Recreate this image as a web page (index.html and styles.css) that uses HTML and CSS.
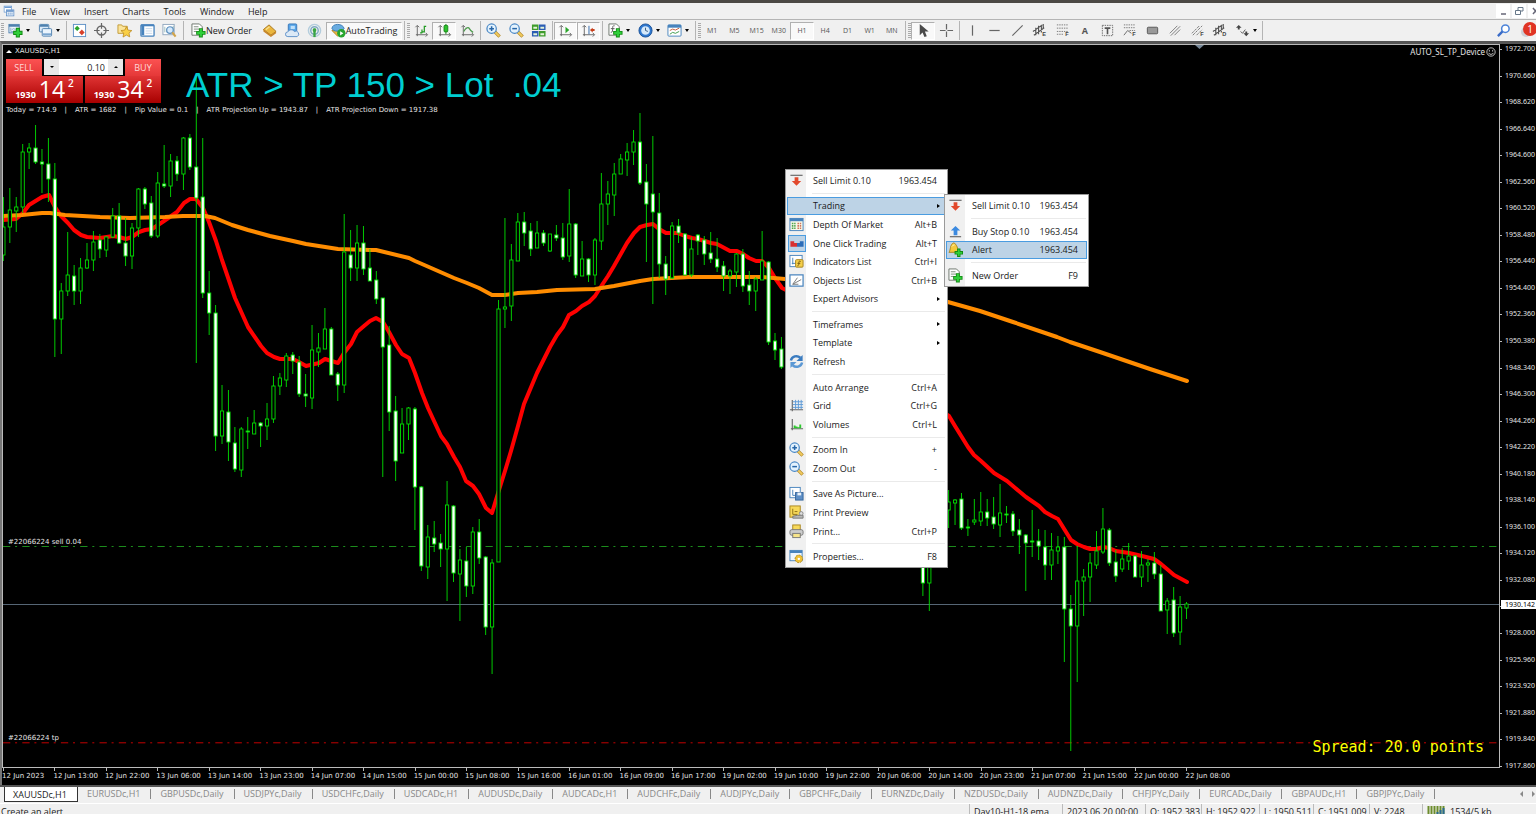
FILE: index.html
```html
<!DOCTYPE html>
<html lang="en">
<head>
  <meta charset="UTF-8">
  <meta name="viewport" content="width=device-width, initial-scale=1.0">
  <title>XAUUSDc,H1</title>
  <link rel="stylesheet" href="styles.css">
</head>
<body>
  <!-- icon set -->
  <svg class="sprite" aria-hidden="true">
    <symbol id="axes" viewBox="0 0 16 16"><path d="M3.500 3v11M2 12.500h12M1.500 4.500l2-2 2 2M12.500 10.500l2 2-2 2" stroke="#666" fill="none"/></symbol>
    <symbol id="i-app" viewBox="0 0 16 16"><rect x="1.500" y="1.500" width="10" height="8" fill="#fff" stroke="#6d9bd0"/><path d="M2 3h9" stroke="#6d9bd0" stroke-width="2"/><rect x="4.500" y="6.500" width="10" height="8" fill="#eef5fc" stroke="#5a8ac4"/><path d="M5 8h9" stroke="#5a8ac4" stroke-width="2"/><path d="M7 10v3M9.500 10v3M12 10v3" stroke="#5a8ac4"/></symbol>
    <symbol id="i-newchart" viewBox="0 0 16 16"><rect x="1" y="1.500" width="11" height="9" fill="#eef6fd" stroke="#4e80ae"/><path d="M1 3h11" stroke="#4e80ae" stroke-width="2"/><path d="M3 5v4h3M4 7l2-1 2 1" stroke="#8aaaca" fill="none"/><path d="M10.500 5v10.500M5.500 10.500h10" stroke="#128a12" stroke-width="4.400"/><path d="M10.500 6v8.500M6.500 10.500h8" stroke="#2fce3a" stroke-width="2.600"/></symbol>
    <symbol id="i-profiles" viewBox="0 0 16 16"><rect x="1.500" y="1.500" width="10" height="8" rx="1" fill="#d9e9f8" stroke="#4e80ae"/><path d="M2 3h9" stroke="#4e80ae" stroke-width="2"/><rect x="4.500" y="6" width="10" height="8" rx="1" fill="#eaf4fd" stroke="#4e80ae"/><path d="M5 12h9" stroke="#79a5cf" stroke-width="2"/></symbol>
    <symbol id="i-market" viewBox="0 0 16 16"><rect x="1.500" y="1.500" width="13" height="13" fill="#fff" stroke="#5c8fc4"/><path d="M5.500 3l2.800 2.800L5.500 8.600 2.700 5.800z" fill="#2ca52c"/><path d="M10.500 7l3 3-3 3-3-3z" fill="#d8402a"/></symbol>
    <symbol id="i-target" viewBox="0 0 16 16"><circle cx="8" cy="8" r="4.800" fill="none" stroke="#666" stroke-width="1.500"/><path d="M8 0v6M8 10v6M0 8h6M10 8h6" stroke="#666" stroke-width="1.300"/></symbol>
    <symbol id="i-favor" viewBox="0 0 16 16"><path d="M1 2h4l1 1.500h5V11H1z" fill="#fbe49a" stroke="#c29a35"/><path d="M10 4l1.800 3.600 4 .5-3 2.700.8 4-3.600-1.900L6.400 15l.8-4.200-3-2.700 4-.5z" fill="#f9cf45" stroke="#b9871c" stroke-width=".8"/></symbol>
    <symbol id="i-data" viewBox="0 0 16 16"><rect x="1" y="2" width="14" height="12" rx="1" fill="#fff" stroke="#4783bd" stroke-width="1.400"/><path d="M3 3v10" stroke="#4783bd" stroke-width="3"/><path d="M1 2.500h14" stroke="#4783bd" stroke-width="2"/><path d="M6 6h7M6 8.500h7M6 11h7" stroke="#c5d8ea"/></symbol>
    <symbol id="i-tester" viewBox="0 0 16 16"><rect x="1" y="1.500" width="12" height="11" fill="#fff" stroke="#8fa6bd"/><path d="M3 10V4M5 10V6M12 9V3" stroke="#9bb"/><circle cx="8.500" cy="7.500" r="3.500" fill="#d5eafc" stroke="#5d8fbf" stroke-width="1.300"/><path d="M11 10l3.500 4.500" stroke="#d2a44a" stroke-width="2.300"/></symbol>
    <symbol id="i-order" viewBox="0 0 16 16"><path d="M1 1h8l3 3v9H1z" fill="#fff" stroke="#6c746c"/><path d="M3 4h5M3 6.500h6M3 9h3" stroke="#7d8a7d"/><path d="M10.500 5.500v10M5.500 10.500h10" stroke="#128a12" stroke-width="4.200"/><path d="M10.500 6.500v8M6.500 10.500h8" stroke="#2fce3a" stroke-width="2.400"/></symbol>
    <symbol id="i-book" viewBox="0 0 16 16"><path d="M1.500 7l6-5 7.500 7-5.500 4z" fill="#eab63e" stroke="#a8741a"/><path d="M1.500 7l8 6 5.500-4v2l-5.500 4-8-6z" fill="#c8862a"/><path d="M4 7l4-3" stroke="#f9e08a" stroke-width="1.500"/></symbol>
    <symbol id="i-cloud" viewBox="0 0 16 16"><rect x="3.500" y="1" width="9" height="8" rx="1" fill="#55a4e8" stroke="#3a78b8"/><path d="M6 3h4.500v3.500H6z" fill="#bfe0fa"/><path d="M3 14.500a2.500 2.500 0 0 1 0-5 4 4 0 0 1 7-.5 3 3 0 0 1 3 5.500z" fill="#dce9f6" stroke="#5d8fc9"/></symbol>
    <symbol id="i-signal" viewBox="0 0 16 16"><circle cx="8" cy="8" r="6.500" fill="none" stroke="#b3cddd" stroke-width="1.500"/><circle cx="8" cy="8" r="4" fill="none" stroke="#7fa9c3" stroke-width="1.500"/><path d="M8 6v9" stroke="#3aa544" stroke-width="2.500"/><circle cx="8" cy="7.500" r="2" fill="#3aa544"/></symbol>
    <symbol id="i-auto" viewBox="0 0 16 16"><path d="M1 8l6 6 6-4V7z" fill="#eab63e" stroke="#b18325"/><path d="M1 6c0-6 12-6 13 0l-2 2c-3 1-7 1-9 0z" fill="#68abe0" stroke="#3c7cb5"/><circle cx="11" cy="11" r="4.500" fill="#27a52e"/><path d="M9.700 8.800v4.400l3.500-2.200z" fill="#fff"/></symbol>
    <symbol id="i-bars" viewBox="0 0 16 16"><use href="#axes"/><path d="M8.500 11V7M6.500 10.500h2M11 3v7M11 3.500h2M9 9.500h2" stroke="#229a22" stroke-width="1.300" fill="none"/></symbol>
    <symbol id="i-candles" viewBox="0 0 16 16"><use href="#axes"/><path d="M9.500 1v11" stroke="#178417"/><rect x="7.500" y="2.500" width="4" height="7" rx="1" fill="#2cc42c" stroke="#178417"/></symbol>
    <symbol id="i-line" viewBox="0 0 16 16"><use href="#axes"/><path d="M4 9c2-4 5-5 6-3s2 3 4 4" stroke="#4c9a4c" stroke-width="1.300" fill="none"/></symbol>
    <symbol id="i-zoomin" viewBox="0 0 16 16"><path d="M9.500 9.500l5 5" stroke="#b58a2c" stroke-width="3.600"/><path d="M9.500 9.500l4.600 4.600" stroke="#f1cb5e" stroke-width="2"/><circle cx="6" cy="6" r="5" fill="#e3f2fd" stroke="#4685c4" stroke-width="1.300"/><path d="M3.500 6h5M6 3.500v5" stroke="#2766a8" stroke-width="1.600"/></symbol>
    <symbol id="i-zoomout" viewBox="0 0 16 16"><path d="M9.500 9.500l5 5" stroke="#b58a2c" stroke-width="3.600"/><path d="M9.500 9.500l4.600 4.600" stroke="#f1cb5e" stroke-width="2"/><circle cx="6" cy="6" r="5" fill="#e3f2fd" stroke="#4685c4" stroke-width="1.300"/><path d="M3.500 6h5" stroke="#2766a8" stroke-width="1.600"/></symbol>
    <symbol id="i-tile" viewBox="0 0 16 16"><path d="M1 1.500h7v6H1zM8.500 8.500h7v6h-7z" fill="#3f9c2c"/><path d="M8.500 1.500h7v6h-7zM1 8.500h7v6H1z" fill="#2a5cb4"/><path d="M2.500 4h4v2h-4zM10 4h4v2h-4zM2.500 11h4v2h-4zM10 11h4v2h-4z" fill="#e3f3d8"/></symbol>
    <symbol id="i-scroll" viewBox="0 0 16 16"><use href="#axes"/><path d="M8 4v7l4-3.500z" fill="#2aa52a"/></symbol>
    <symbol id="i-shift" viewBox="0 0 16 16"><use href="#axes"/><path d="M8.500 3v9" stroke="#2b64a8"/><path d="M9.500 7.500l3-2.500v1.500h2v2h-2V10z" fill="#c8401c"/></symbol>
    <symbol id="i-indic" viewBox="0 0 16 16"><path d="M1 1h8l3 3v9H1z" fill="#fff" stroke="#6c746c"/><path d="M7 3c-2-.5-2 1-2 3s0 4-2 4M3 6h4" stroke="#555" fill="none"/><path d="M10.500 5.500v10M5.500 10.500h10" stroke="#128a12" stroke-width="4.200"/><path d="M10.500 6.500v8M6.500 10.500h8" stroke="#2fce3a" stroke-width="2.400"/></symbol>
    <symbol id="i-clock" viewBox="0 0 16 16"><circle cx="8" cy="8" r="7" fill="#2e78d0" stroke="#1c5298"/><circle cx="8" cy="8" r="4.600" fill="#d4e8fa"/><path d="M8 5v3l2.500 1" stroke="#35597c" fill="none"/></symbol>
    <symbol id="i-tpl" viewBox="0 0 16 16"><rect x="1" y="2" width="14" height="12" rx="1" fill="#fff" stroke="#4783bd"/><path d="M1 3.500h14" stroke="#4783bd" stroke-width="3"/><path d="M3 8l3-1.500 3 1 4-2" stroke="#c25a3a" fill="none"/><path d="M3 12l3-2 3 1 4-2" stroke="#3a9a4a" fill="none"/></symbol>
    <symbol id="i-cursor" viewBox="0 0 16 16"><path d="M4 1v12l3-3 2 5 2.500-1-2-5h4z" fill="#4a4a4a"/></symbol>
    <symbol id="i-cross" viewBox="0 0 16 16"><path d="M8 1v6M8 9v6M1 8h6M9 8h6" stroke="#666" stroke-width="1.300"/></symbol>
    <symbol id="i-vline" viewBox="0 0 16 16"><path d="M8 2.500v11" stroke="#666" stroke-width="1.300"/></symbol>
    <symbol id="i-hline" viewBox="0 0 16 16"><path d="M2.500 8h11" stroke="#666" stroke-width="1.300"/></symbol>
    <symbol id="i-trend" viewBox="0 0 16 16"><path d="M2.500 13.500L13.500 2.500" stroke="#666" stroke-width="1.200"/></symbol>
    <symbol id="i-equi" viewBox="0 0 16 16"><path d="M1 9l10-7M2 13L13 5M4 5v8M7 3v9M10 2v8M12 1v5" stroke="#555" stroke-width="1.200" fill="none"/><text x="11" y="14" class="tiny">E</text></symbol>
    <symbol id="i-fibo" viewBox="0 0 16 16"><path d="M2 2h12M2 5.500h12M2 9h12M2 12h7" stroke="#777" stroke-dasharray="1.500 1"/><text x="11" y="14" class="tiny">F</text></symbol>
    <symbol id="i-label" viewBox="0 0 16 16"><rect x="2.500" y="2.500" width="11" height="11" fill="none" stroke="#666" stroke-dasharray="1.500 1"/><path d="M5 5.500h6M8 5.500V12" stroke="#555" stroke-width="1.700"/></symbol>
    <symbol id="i-expan" viewBox="0 0 16 16"><path d="M2 2h12M2 5h12M8 8h6" stroke="#777" stroke-dasharray="1.500 1"/><path d="M2 13l4-5 4 3" stroke="#666" fill="none"/><text x="11" y="14" class="tiny">F</text></symbol>
    <symbol id="i-rect" viewBox="0 0 16 16"><rect x="2.500" y="4.500" width="11" height="7" rx="1" fill="#999" stroke="#555"/></symbol>
    <symbol id="i-chan" viewBox="0 0 16 16"><path d="M3 11l8-8M4 13.500L14 3.500M8 13l6-6" stroke="#777"/></symbol>
    <symbol id="i-chanf" viewBox="0 0 16 16"><path d="M2 11l8-8M3 13l10-10M7 13l6-6" stroke="#777" stroke-dasharray="3 1"/><text x="11" y="14" class="tiny">F</text></symbol>
    <symbol id="i-stdev" viewBox="0 0 16 16"><path d="M1 9l10-7M2 13L13 5M4 5v8M7 3v9M10 2v8M12 1v5" stroke="#555" stroke-width="1.200" fill="none"/><text x="11" y="14" class="tiny">D</text></symbol>
    <symbol id="i-arrows" viewBox="0 0 16 16"><path d="M4 2l3 3H5v2H3V5H1zM12 14l-3-3h2V9h2v2h2z" fill="#444"/><path d="M6 9l2 2 3-4" stroke="#555" fill="none"/></symbol>
    <symbol id="i-search" viewBox="0 0 16 16"><circle cx="10" cy="6" r="4" fill="#fff" stroke="#4a82d8" stroke-width="1.600"/><path d="M7 9l-5 5" stroke="#3a6cc8" stroke-width="2.500"/></symbol>
    <symbol id="i-sell" viewBox="0 0 16 16"><path d="M1.500 2.500h13" stroke="#777" stroke-width="1.400"/><path d="M6 4.500h4v4h3l-5 5-5-5h3z" fill="#e2492c"/></symbol>
    <symbol id="i-buy" viewBox="0 0 16 16"><path d="M2 13.500h12" stroke="#777" stroke-width="1.400"/><path d="M6 12h4V7h3L8 2 3 7h3z" fill="#3c8ae0"/></symbol>
    <symbol id="i-dom" viewBox="0 0 16 16"><rect x="1" y="1.500" width="14" height="13" fill="#f8f8e8" stroke="#4783bd"/><path d="M1 3h14" stroke="#4783bd" stroke-width="3"/><path d="M3 7h4M3 9.500h4M3 12h4" stroke="#4da34d" stroke-width="1.700" stroke-dasharray="1.700 .8"/><path d="M9 7h4M9 9.500h4M9 12h4" stroke="#d0745a" stroke-width="1.700" stroke-dasharray="1.700 .8"/></symbol>
    <symbol id="i-oneclick" viewBox="0 0 16 16"><path d="M1 5.500h4v2h3v4H1z" fill="#d83030"/><path d="M15 5.500h-4v2H8v4h7z" fill="#2b6cb8"/></symbol>
    <symbol id="i-indlist" viewBox="0 0 16 16"><rect x="1" y="1.500" width="13" height="12" fill="#fff" stroke="#4783bd"/><path d="M4 4v7M3 10h5" stroke="#4783bd"/><rect x="7" y="6" width="8" height="8" rx="1" fill="#f4cf4a" stroke="#a98520"/><path d="M12.500 8c-2-1-2 0-2 2s-.5 2.500-1.500 2.500M9 10h3" stroke="#7a5c10" fill="none"/></symbol>
    <symbol id="i-objlist" viewBox="0 0 16 16"><rect x="1" y="2" width="14" height="12" fill="#fff" stroke="#4783bd" stroke-width="1.300"/><path d="M4 12l5-7M4 12l9-5M4 12h6" stroke="#777"/></symbol>
    <symbol id="i-refresh" viewBox="0 0 16 16"><path d="M2 7a6 6 0 0 1 10-3" stroke="#3b7cc0" stroke-width="2.600" fill="none"/><path d="M14.500 1v6.500H8z" fill="#3b7cc0"/><path d="M14 9a6 6 0 0 1-10 3" stroke="#5b98d4" stroke-width="2.600" fill="none"/><path d="M1.500 15V8.500H8z" fill="#5b98d4"/></symbol>
    <symbol id="i-grid" viewBox="0 0 16 16"><path d="M3.500 2v12M1 12.500h14" stroke="#666" stroke-width="1.200"/><path d="M7 2v10M10 2v10M13 2v10M4 4h11M4 7h11M4 10h11" stroke="#5d9ad6"/></symbol>
    <symbol id="i-vol" viewBox="0 0 16 16"><path d="M3.500 2v12M2 12.500h13" stroke="#666" stroke-width="1.200"/><path d="M5 12V9h2v1h2v1h2V8h2v4z" fill="#2cc92c"/></symbol>
    <symbol id="i-save" viewBox="0 0 16 16"><rect x="1" y="1.500" width="11" height="11" fill="#fff" stroke="#4783bd"/><path d="M4 4v6h3" stroke="#4783bd" fill="none"/><rect x="7" y="7" width="8" height="8" fill="#5e8fc6" stroke="#34659c"/><path d="M9 7h4v3H9z" fill="#e8f0f8"/></symbol>
    <symbol id="i-preview" viewBox="0 0 16 16"><rect x="1" y="1" width="11" height="12" fill="#f7d95a" stroke="#a98520"/><path d="M4 4v6h5M6 7h3" stroke="#8d6f18" fill="none"/><path d="M9 11h6v3H4v-2z" fill="#b9b9b9" stroke="#777"/><circle cx="13" cy="9" r="2" fill="#ddd" stroke="#888"/></symbol>
    <symbol id="i-print" viewBox="0 0 16 16"><rect x="4" y="1" width="8" height="6" fill="#f7d95a" stroke="#a98520"/><rect x="1" y="6" width="14" height="6" rx="2" fill="#ccc" stroke="#777"/><rect x="4" y="10" width="8" height="4.500" fill="#f7e48a" stroke="#777"/></symbol>
    <symbol id="i-props" viewBox="0 0 16 16"><rect x="1" y="1.500" width="13" height="11" fill="#eef6fd" stroke="#4783bd"/><path d="M1 3h13" stroke="#4783bd" stroke-width="2.500"/><circle cx="10.500" cy="10.500" r="4" fill="#f2c234" stroke="#a98520" stroke-dasharray="2 1"/><circle cx="10.500" cy="10.500" r="1.300" fill="#fff"/></symbol>
    <symbol id="i-alert" viewBox="0 0 16 16"><path d="M1 11c2-2 1-9 5-10 4 1 4 7 6 10z" fill="#f4c93c" stroke="#a98520"/><path d="M4 5q1-2 3-2" stroke="#fff3b8" fill="none"/><path d="M11.500 7v9M7 11.500h9" stroke="#128a12" stroke-width="3.600"/><path d="M11.500 8v7M8 11.500h7" stroke="#2fce3a" stroke-width="1.800"/></symbol>
  </svg>

  <div class="titlestrip"></div>

  <header class="menubar">
    <svg class="icon app"><use href="#i-app"/></svg>
    <nav class="menus">
      <button>File</button><button>View</button><button>Insert</button><button>Charts</button><button>Tools</button><button>Window</button><button>Help</button>
    </nav>
    <div class="winbtns">
      <button aria-label="Minimize"><svg viewBox="0 0 12 12"><path d="M4 9h5" stroke="#667" stroke-width="1.500"/></svg></button>
      <button aria-label="Restore"><svg viewBox="0 0 12 12"><path d="M5 5V2.500h5V6H8M2.500 5.500h5v4h-5z" fill="none" stroke="#678"/></svg></button>
      <button aria-label="Close"><svg viewBox="0 0 12 12"><path d="M4 3l5 6M9 3L4 9" stroke="#667" stroke-width="1.500"/></svg></button>
    </div>
  </header>

  <div class="toolbar">
    <span class="grip"></span>
    <div class="group drop2">
      <button class="drop" aria-label="New chart"><svg class="icon"><use href="#i-newchart"/></svg></button>
      <button class="drop" aria-label="Profiles"><svg class="icon"><use href="#i-profiles"/></svg></button>
    </div>
    <span class="sep"></span>
    <div class="group five">
      <button aria-label="Market Watch"><svg class="icon"><use href="#i-market"/></svg></button>
      <button aria-label="Data Window"><svg class="icon"><use href="#i-target"/></svg></button>
      <button aria-label="Navigator"><svg class="icon"><use href="#i-favor"/></svg></button>
      <button aria-label="Terminal"><svg class="icon"><use href="#i-data"/></svg></button>
      <button aria-label="Strategy Tester"><svg class="icon"><use href="#i-tester"/></svg></button>
    </div>
    <span class="sep"></span>
    <button class="wide order"><svg class="icon"><use href="#i-order"/></svg>New Order</button>
    <div class="group three">
      <button aria-label="MetaEditor"><svg class="icon"><use href="#i-book"/></svg></button>
      <button aria-label="Cloud"><svg class="icon"><use href="#i-cloud"/></svg></button>
      <button aria-label="Signals"><svg class="icon"><use href="#i-signal"/></svg></button>
    </div>
    <button class="wide auto on"><svg class="icon"><use href="#i-auto"/></svg>AutoTrading</button>
    <span class="sep"></span>
    <span class="grip"></span>
    <div class="group three">
      <button aria-label="Bar chart"><svg class="icon"><use href="#i-bars"/></svg></button>
      <button class="on" aria-label="Candlesticks"><svg class="icon"><use href="#i-candles"/></svg></button>
      <button aria-label="Line chart"><svg class="icon"><use href="#i-line"/></svg></button>
    </div>
    <span class="sep"></span>
    <div class="group three">
      <button aria-label="Zoom in"><svg class="icon"><use href="#i-zoomin"/></svg></button>
      <button aria-label="Zoom out"><svg class="icon"><use href="#i-zoomout"/></svg></button>
      <button aria-label="Tile windows"><svg class="icon"><use href="#i-tile"/></svg></button>
    </div>
    <span class="sep"></span>
    <div class="group two">
      <button class="on" aria-label="Auto scroll"><svg class="icon"><use href="#i-scroll"/></svg></button>
      <button class="on" aria-label="Chart shift"><svg class="icon"><use href="#i-shift"/></svg></button>
    </div>
    <span class="sep"></span>
    <div class="group drop3">
      <button class="drop" aria-label="Indicators"><svg class="icon"><use href="#i-indic"/></svg></button>
      <button class="drop" aria-label="Periods"><svg class="icon"><use href="#i-clock"/></svg></button>
      <button class="drop" aria-label="Templates"><svg class="icon"><use href="#i-tpl"/></svg></button>
    </div>
    <span class="sep"></span>
    <span class="grip"></span>
    <div class="group frames">
      <button>M1</button><button>M5</button><button>M15</button><button>M30</button><button class="on">H1</button><button>H4</button><button>D1</button><button>W1</button><button>MN</button>
    </div>
    <span class="sep"></span>
    <span class="grip"></span>
    <div class="group two">
      <button class="on" aria-label="Cursor"><svg class="icon"><use href="#i-cursor"/></svg></button>
      <button aria-label="Crosshair"><svg class="icon"><use href="#i-cross"/></svg></button>
    </div>
    <span class="sep"></span>
    <div class="group draw">
      <button aria-label="Vertical line"><svg class="icon"><use href="#i-vline"/></svg></button>
      <button aria-label="Horizontal line"><svg class="icon"><use href="#i-hline"/></svg></button>
      <button aria-label="Trendline"><svg class="icon"><use href="#i-trend"/></svg></button>
      <button aria-label="Equidistant channel"><svg class="icon"><use href="#i-equi"/></svg></button>
      <button aria-label="Fibonacci"><svg class="icon"><use href="#i-fibo"/></svg></button>
      <button class="letter">A</button>
      <button aria-label="Text label"><svg class="icon"><use href="#i-label"/></svg></button>
      <button aria-label="Expansion"><svg class="icon"><use href="#i-expan"/></svg></button>
      <button aria-label="Rectangle"><svg class="icon"><use href="#i-rect"/></svg></button>
      <button aria-label="Channel"><svg class="icon"><use href="#i-chan"/></svg></button>
      <button aria-label="Fibo channel"><svg class="icon"><use href="#i-chanf"/></svg></button>
      <button aria-label="Deviation channel"><svg class="icon"><use href="#i-stdev"/></svg></button>
    </div>
    <button class="drop arrows" aria-label="Arrows"><svg class="icon"><use href="#i-arrows"/></svg></button>
    <span class="sep"></span>
    <div class="tools-right">
      <button aria-label="Search"><svg class="icon"><use href="#i-search"/></svg></button>
      <button class="bell">1</button>
    </div>
  </div>

  <main class="chart">
    <div class="plot" id="plot">
      <svg class="candles" id="candles" aria-label="XAUUSDc H1 candles"></svg>

      <div class="overlay">
        <div class="symbol"><span class="tri"></span>XAUUSDc,H1</div>
        <div class="trade">
          <button class="side sell">SELL</button>
          <div class="lots">
            <button aria-label="Less"><span class="down"></span></button>
            <input type="text" value="0.10" aria-label="Lots">
            <button aria-label="More"><span class="up"></span></button>
          </div>
          <button class="side buy">BUY</button>
          <button class="price"><small>1930</small><b>14</b><sup>2</sup></button>
          <button class="price"><small>1930</small><b>34</b><sup>2</sup></button>
        </div>
        <div class="stats">
          <span>Today = 714.9</span><i>|</i><span>ATR = 1682</span><i>|</i><span>Pip Value = 0.1</span><i>|</i><span>ATR Projection Up = 1943.87</span><i>|</i><span>ATR Projection Down = 1917.38</span>
        </div>
      </div>
      <div class="headline">ATR &gt; TP 150 &gt; Lot &nbsp;.04</div>
      <div class="expert">AUTO_SL_TP_Device<svg viewBox="0 0 12 12"><circle cx="6" cy="6" r="5" fill="none" stroke="#ddd"/><path d="M4 3.500v2M8 3.500v2M3 7.500q3 3 6 0" fill="none" stroke="#ddd"/></svg></div>
      <div class="level order-sell">#22066224 sell 0.04</div>
      <div class="level order-tp">#22066224 tp</div>
      <div class="spread">Spread: 20.0 points</div>
    </div>
    <div class="prices" id="prices"><span class="bid">1930.142</span></div>
    <div class="times" id="times"></div>

    <ul class="ctx main-menu">
      <li><button><svg class="icon"><use href="#i-sell"/></svg><span>Sell Limit 0.10</span><kbd>1963.454</kbd></button></li>
      <li class="line"></li>
      <li class="hot"><button class="sub"><span>Trading</span></button></li>
      <li><button><svg class="icon"><use href="#i-dom"/></svg><span>Depth Of Market</span><kbd>Alt+B</kbd></button></li>
      <li class="checked"><button><svg class="icon"><use href="#i-oneclick"/></svg><span>One Click Trading</span><kbd>Alt+T</kbd></button></li>
      <li><button><svg class="icon"><use href="#i-indlist"/></svg><span>Indicators List</span><kbd>Ctrl+I</kbd></button></li>
      <li><button><svg class="icon"><use href="#i-objlist"/></svg><span>Objects List</span><kbd>Ctrl+B</kbd></button></li>
      <li><button class="sub"><span>Expert Advisors</span></button></li>
      <li class="line"></li>
      <li><button class="sub"><span>Timeframes</span></button></li>
      <li><button class="sub"><span>Template</span></button></li>
      <li><button><svg class="icon"><use href="#i-refresh"/></svg><span>Refresh</span></button></li>
      <li class="line"></li>
      <li><button><span>Auto Arrange</span><kbd>Ctrl+A</kbd></button></li>
      <li><button><svg class="icon"><use href="#i-grid"/></svg><span>Grid</span><kbd>Ctrl+G</kbd></button></li>
      <li><button><svg class="icon"><use href="#i-vol"/></svg><span>Volumes</span><kbd>Ctrl+L</kbd></button></li>
      <li class="line"></li>
      <li><button><svg class="icon"><use href="#i-zoomin"/></svg><span>Zoom In</span><kbd>+</kbd></button></li>
      <li><button><svg class="icon"><use href="#i-zoomout"/></svg><span>Zoom Out</span><kbd>-</kbd></button></li>
      <li class="line"></li>
      <li><button><svg class="icon"><use href="#i-save"/></svg><span>Save As Picture...</span></button></li>
      <li><button><svg class="icon"><use href="#i-preview"/></svg><span>Print Preview</span></button></li>
      <li><button><svg class="icon"><use href="#i-print"/></svg><span>Print...</span><kbd>Ctrl+P</kbd></button></li>
      <li class="line"></li>
      <li><button><svg class="icon"><use href="#i-props"/></svg><span>Properties...</span><kbd>F8</kbd></button></li>
    </ul>

    <ul class="ctx sub-menu">
      <li><button><svg class="icon"><use href="#i-sell"/></svg><span>Sell Limit 0.10</span><kbd>1963.454</kbd></button></li>
      <li class="line"></li>
      <li><button><svg class="icon"><use href="#i-buy"/></svg><span>Buy Stop 0.10</span><kbd>1963.454</kbd></button></li>
      <li class="hot"><button><svg class="icon"><use href="#i-alert"/></svg><span>Alert</span><kbd>1963.454</kbd></button></li>
      <li class="line"></li>
      <li><button><svg class="icon"><use href="#i-order"/></svg><span>New Order</span><kbd>F9</kbd></button></li>
    </ul>
  </main>

  <nav class="tabs">
    <button class="active">XAUUSDc,H1</button><button>EURUSDc,H1</button><button>GBPUSDc,Daily</button><button>USDJPYc,Daily</button><button>USDCHFc,Daily</button><button>USDCADc,H1</button><button>AUDUSDc,Daily</button><button>AUDCADc,H1</button><button>AUDCHFc,Daily</button><button>AUDJPYc,Daily</button><button>GBPCHFc,Daily</button><button>EURNZDc,Daily</button><button>NZDUSDc,Daily</button><button>AUDNZDc,Daily</button><button>CHFJPYc,Daily</button><button>EURCADc,Daily</button><button>GBPAUDc,H1</button><button>GBPJPYc,Daily</button>
    <div class="tab-arrows"><span class="left"></span><span class="right"></span></div>
  </nav>

  <footer class="status">
    <span>Create an alert</span>
    <span>Day10-H1-18 ema</span>
    <span>2023.06.20 00:00</span>
    <span>O: 1952.383</span>
    <span>H: 1952.922</span>
    <span>L: 1950.511</span>
    <span>C: 1951.009</span>
    <span>V: 2248</span>
    <span class="net"><svg viewBox="0 0 20 12"><path d="M1.500 0v12M4.500 0v12M7.500 0v12M10.500 0v12M13.500 0v12M16.500 0v12" stroke="#6c8c2c" stroke-width="2"/><path d="M7.500 8v4M10.500 6v6M13.500 4v8M16.500 2v10" stroke="#2a6a90" stroke-width="2"/></svg>1534/5 kb</span>
  </footer>

  <script src="chart.js"></script>
</body>
</html>
```
FILE: styles.css
```css
* {
  box-sizing: border-box;
}

body {
  margin: 0;
  height: 100vh;
  display: flex;
  flex-direction: column;
  overflow: hidden;
  background: #f0f0f0;
  color: #222;
  font-family: "Open Sans", "Noto Sans", sans-serif;
  font-size: 9px;
}

button {
  font: inherit;
  color: inherit;
  background: none;
  border: 0;
  padding: 0;
  margin: 0;
  white-space: nowrap;
}

.sprite {
  display: none;
}

.icon {
  width: 15px;
  height: 15px;
  flex: none;
}

.tiny {
  font: bold 6px "Liberation Sans", sans-serif;
  fill: #444;
}

.titlestrip {
  height: 3px;
  background: #4b4844;
}

/* menu bar */
.menubar {
  display: flex;
  align-items: center;
  height: 17px;
  padding-left: 3px;
  border-bottom: 1px solid #b4b4b4;
}

.app {
  width: 12px;
  height: 12px;
}

.menus {
  display: flex;
  flex: 1;
}

.menus button {
  padding: 0 7px;
}

.winbtns {
  display: flex;
  gap: 2px;
  margin-right: -6px;
}

.winbtns button {
  width: 14px;
  height: 14px;
  background: #fff;
}

.winbtns svg {
  display: block;
  width: 12px;
  height: 12px;
  margin: 0 auto;
}

/* toolbar */
.toolbar {
  display: flex;
  align-items: center;
  height: 21px;
  flex: none;
}

.toolbar button {
  display: flex;
  align-items: center;
  justify-content: center;
  height: 18px;
}

.toolbar .on {
  background: #f9f9f9;
  border: 1px solid #b0b0b0;
  border-right-color: #fff;
  border-bottom-color: #fff;
}

.group {
  display: flex;
  flex: none;
}

.group button {
  flex: 1;
}

.grip {
  width: 3px;
  height: 16px;
  margin-left: 1px;
  flex: none;
  background: repeating-linear-gradient(#aaa 0 1px, #f0f0f0 1px 2px);
}

.sep {
  width: 4px;
  height: 19px;
  flex: none;
  background: linear-gradient(#b4b4b4, #b4b4b4) 2px 0 / 1px 100% no-repeat;
}

.group.two { width: 46px; }
.group.three { width: 68px; }
.group.five { width: 113px; }
.group.drop2 { width: 60px; }
.group.drop3 { width: 89px; }
.group.frames { width: 202px; }
.group.draw { width: 270px; }

.toolbar .drop {
  justify-content: flex-start;
  padding-left: 4px;
}

.drop::after {
  content: "";
  margin-left: 3px;
  border: 2px solid transparent;
  border-top: 3px solid #000;
  border-bottom: 0;
}

.arrows {
  width: 29px;
}

.frames {
  color: #555;
  font-size: 7px;
}

.letter {
  color: #555;
  font-weight: bold;
}

.toolbar .order {
  width: 73px;
}

.toolbar .auto {
  width: 76px;
}

.tools-right {
  display: flex;
  gap: 12px;
  margin-left: auto;
  align-items: center;
}

.toolbar .bell {
  width: 14px;
  height: 14px;
  border-radius: 50%;
  background: #e03424;
  box-shadow: -4px 3px 0 -2px #cfcfd6;
  color: #fff;
  font-size: 10px;
  margin: -4px -1px 0 0;
}

/* chart window */
.chart {
  position: relative;
  flex: 1;
  min-height: 0;
  display: grid;
  grid-template-columns: 1fr 36px;
  grid-template-rows: 1fr 17px;
  background: #000;
  color: #e4e4e4;
  border-top: 3px solid #555;
  border-left: 2px solid #777;
  font-family: "DejaVu Sans", sans-serif;
  font-size: 7px;
}

.plot {
  position: relative;
  border: 1px solid #bbb;
  min-height: 0;
}

.candles {
  position: absolute;
  inset: 0;
  width: 100%;
  height: 100%;
}

.overlay {
  position: absolute;
  left: 3px;
  top: 1px;
}

.symbol {
  display: flex;
  align-items: center;
  gap: 3px;
  height: 10px;
}

.tri {
  border: 3px solid transparent;
  border-bottom-color: #fff;
  border-top: 0;
}

.trade {
  display: grid;
  grid-template-columns: 36px 40px 40px 36px;
  grid-template-rows: 17px 27px;
  column-gap: 1px;
  width: 155px;
  margin-top: 3px;
  font-family: "Open Sans", sans-serif;
  color: #fff;
}

.side {
  font-size: 9px;
  background: linear-gradient(#fb5252, #e53838);
  color: #ffd9d9;
}

.lots {
  grid-column: span 2;
  display: flex;
  height: 16px;
  margin: 0 1px;
  background: #fff;
}

.lots button {
  width: 15px;
  background: #e8e8e8;
  display: flex;
  align-items: center;
  justify-content: center;
}

.lots input {
  flex: 1;
  min-width: 0;
  border: 0;
  padding: 0 3px;
  text-align: right;
  font: 9px "Open Sans", sans-serif;
  color: #222;
}

.down,
.up {
  border: 2px solid transparent;
}

.down {
  border-top-color: #000;
  border-bottom: 0;
}

.up {
  border-bottom-color: #000;
  border-top: 0;
}

.price {
  grid-column: span 2;
  display: flex;
  align-items: baseline;
  justify-content: center;
  gap: 3px;
  line-height: 27px;
  background: linear-gradient(#e03434, #a80000);
}

.price:last-child {
  margin-left: 1px;
}

.price small {
  font-size: 9px;
  font-weight: bold;
}

.price b {
  font-size: 23px;
  font-weight: normal;
}

.price sup {
  align-self: flex-start;
  font-size: 10px;
  font-weight: 600;
  line-height: 14px;
}

.stats {
  display: flex;
  gap: 8px;
  margin-top: 2px;
  line-height: 10px;
  white-space: nowrap;
}

.stats i {
  font-style: normal;
}

.headline {
  position: absolute;
  left: 183px;
  top: 20px;
  font: 35px/39px "Liberation Sans", sans-serif;
  color: #00ced1;
  white-space: pre;
}

.expert {
  position: absolute;
  right: 3px;
  top: 1px;
  display: flex;
  align-items: center;
  gap: 1px;
  font-size: 8px;
  font-family: "Noto Sans", sans-serif;
}

.expert svg {
  width: 10px;
  height: 10px;
}

.level {
  position: absolute;
  left: 5px;
  line-height: 10px;
}

.order-sell {
  top: 492px;
}

.order-tp {
  top: 688px;
}

.spread {
  position: absolute;
  right: 15px;
  bottom: 11px;
  font: 15px/18px "DejaVu Sans Mono", monospace;
  color: #ffff00;
}

.prices {
  position: relative;
  display: flex;
  flex-direction: column;
  justify-content: space-between;
  margin-bottom: -2px;
  font-family: "Noto Sans", sans-serif;
}

.prices span {
  line-height: 9px;
  height: 9px;
  padding-left: 5px;
}

.prices span:not(.bid) {
  background: linear-gradient(#bbb, #bbb) 0 5px / 2px 1px no-repeat;
}

.prices .bid {
  position: absolute;
  top: 556px;
  left: 1px;
  right: 0;
  padding-left: 4px;
  background: #fff;
  color: #000;
}

.times {
  grid-column: span 2;
  display: flex;
  width: 1235px;
  line-height: 16px;
}

.times span {
  flex: 1 1 0;
  min-width: 0;
  white-space: nowrap;
  background: linear-gradient(#bbb, #bbb) 1px 0 / 1px 3px no-repeat;
}

/* context menus */
.ctx {
  position: absolute;
  margin: 0;
  padding: 1px;
  list-style: none;
  display: flex;
  flex-direction: column;
  background: linear-gradient(90deg, #f0f0f0 20px, #fff 20px);
  border: 1px solid #9a9a9a;
  color: #1a1a1a;
  font-family: "Open Sans", "Noto Sans", sans-serif;
  font-size: 9px;
}

.main-menu {
  left: 783px;
  top: 125px;
  width: 163px;
  height: 399px;
}

.sub-menu {
  left: 942px;
  top: 150px;
  width: 145px;
  height: 93px;
}

.ctx li {
  flex: 1;
  min-height: 0;
}

.ctx .line {
  flex: none;
  height: 7px;
  margin: 0 1px 0 25px;
  background: linear-gradient(#eaeaea, #eaeaea) 0 3px / 100% 1px no-repeat;
}

.ctx button {
  display: grid;
  grid-template-columns: 19px 1fr auto;
  column-gap: 7px;
  align-items: center;
  width: 100%;
  height: 100%;
  padding-right: 9px;
  text-align: left;
}

.ctx .icon {
  margin-left: 2px;
}

.ctx span {
  grid-column: 2;
}

.ctx kbd {
  font: inherit;
}

.ctx .sub::after {
  content: "";
  margin-right: -3px;
  border: 2px solid transparent;
  border-left: 3px solid #000;
  border-right: 0;
}

.ctx .hot {
  background: #bdd3e6;
  outline: 1px solid #4a9ce0;
  outline-offset: -1px;
}

.ctx .checked .icon {
  width: 18px;
  height: 17px;
  margin: 0 0 0 1px;
  background: #bdd3e6;
  border: 1px solid #4a9ce0;
}

/* chart tabs */
.tabs {
  display: flex;
  align-items: flex-start;
  height: 18px;
  flex: none;
  padding-left: 4px;
  border-top: 2px solid #555;
  color: #888;
}

.tabs button {
  height: 10px;
  line-height: 10px;
  margin-top: 2px;
  padding: 0 10px 0 9px;
  border-right: 1px solid #888;
}

.tabs .active {
  height: 15px;
  line-height: 13px;
  margin-top: 0;
  padding-left: 8px;
  background: #fff;
  color: #222;
  border: 1px solid #333;
  border-top: 0;
}

.tab-arrows {
  display: flex;
  gap: 9px;
  margin: 4px 1px 0 auto;
}

.left,
.right {
  border: 3px solid transparent;
}

.left {
  border-right-color: #888;
  border-left: 0;
}

.right {
  border-left-color: #888;
  border-right: 0;
}

/* status bar */
.status {
  display: grid;
  grid-template-columns: 1fr 93px 83px 56px 58px 54px 56px 53px 114px;
  height: 11px;
  flex: none;
  overflow: hidden;
  line-height: 16px;
  border-top: 1px solid #fff;
}

.status span {
  padding-left: 4px;
  border-left: 1px solid #bbb;
  white-space: nowrap;
}

.status span:first-child {
  padding-left: 1px;
  border: 0;
}

.net svg {
  width: 20px;
  height: 12px;
  margin: 2px 3px 0 0;
  vertical-align: top;
}
```
FILE: chart.js
```js
// [bar, high, body top, body bottom, low, d = falling / u = rising]
const bars = `0 197 227 255 261 u|1 188 210 227 243 u|2 197 207 211 232 u|3 144 152 207 213 u|4 143 148 152 169 u|5 125 148 162 164 d
6 149 162 164 193 d|7 138 164 179 202 d|8 163 179 319 357 d|9 283 291 319 354 u|10 232 275 291 296 u|11 265 276 291 305 d
12 258 268 291 304 u|13 243 260 268 269 u|14 231 242 260 271 u|15 234 240 249 258 d|16 236 237 250 257 u|17 208 216 237 238 u
18 203 216 243 244 d|19 218 243 256 266 d|20 223 228 256 269 u|21 188 189 228 237 u|22 187 189 204 209 d|23 196 203 236 238 d
24 172 183 236 238 u|25 145 184 186 188 d|26 154 161 186 197 u|27 156 161 174 181 d|28 137 138 174 190 u|29 134 138 167 170 d
30 78 167 198 363 d|31 138 197 293 298 d|32 271 293 313 335 d|33 305 313 436 451 d|34 385 411 436 444 u|35 390 412 442 461 d
36 427 443 469 472 d|37 427 429 470 477 u|38 417 431 432 449 d|39 410 423 434 434 u|40 422 423 426 447 d|41 403 419 426 440 u
42 376 386 419 423 u|43 373 378 386 395 u|44 353 356 380 387 u|45 352 355 361 374 d|46 356 362 394 397 d|47 374 394 396 407 d
48 325 350 398 409 u|49 333 348 352 367 u|50 308 329 349 349 u|51 327 329 375 375 d|52 372 374 385 401 d|53 214 252 385 393 u
54 230 255 268 281 d|55 225 243 268 281 u|56 226 243 269 275 d|57 249 268 281 281 d|58 271 280 299 304 d|59 298 298 347 477 d
60 326 345 412 431 d|61 396 411 461 481 d|62 408 424 453 453 u|63 407 408 424 440 u|64 407 409 487 530 d|65 486 487 566 571 d
66 525 537 567 579 u|67 521 538 544 552 d|68 534 543 549 567 d|69 481 505 549 601 u|70 505 506 573 582 d|71 549 560 574 621 u
72 547 561 586 597 d|73 527 532 586 594 u|74 519 532 558 564 d|75 556 557 627 635 d|76 559 563 627 674 u|77 300 309 562 562 u
78 218 307 309 328 u|79 244 260 306 321 u|80 213 222 261 261 u|81 212 222 233 246 d|82 223 231 249 256 d|83 221 233 248 248 u
84 230 233 243 246 d|85 234 234 251 252 u|86 225 235 238 241 d|87 223 238 257 260 d|88 189 224 256 262 u|89 223 224 275 278 d
90 241 259 276 276 u|91 258 259 275 282 d|92 238 240 275 285 u|93 173 204 241 250 u|94 181 194 204 225 u|95 163 174 195 216 u
96 154 159 174 174 u|97 143 152 160 176 u|98 130 142 152 165 u|99 113 142 183 185 d|100 164 182 204 262 d|101 136 194 212 304 d
102 193 213 264 278 d|103 256 264 279 295 d|104 222 226 278 279 u|105 219 226 233 243 d|106 233 234 275 275 d|107 237 249 275 277 u
108 234 235 241 255 d|109 236 240 254 265 d|110 232 253 259 263 d|111 238 259 267 272 d|112 261 266 276 291 d|113 269 271 276 294 u
114 253 254 272 287 u|115 249 254 286 292 d|116 271 285 291 305 d|117 277 279 291 311 u|118 231 261 280 280 u|119 261 262 342 345 d
120 333 341 350 360 d|121 337 349 367 369 d|143 540 545 583 596 d|144 540 545 583 611 u|147 490 502 510 528 u|148 499 500 503 525 u
149 493 499 528 530 d|150 519 527 528 536 d|151 499 520 522 525 u|152 492 512 521 526 u|153 499 512 518 526 d|154 497 517 524 529 d
155 484 513 525 537 u|156 506 514 515 523 d|157 511 514 531 536 d|158 519 530 535 554 d|159 534 535 543 591 d|160 510 541 542 557 d
161 529 541 546 560 d|162 530 547 565 580 d|163 533 550 565 580 u|164 536 547 551 564 u|165 537 547 609 662 d|166 595 609 626 751 d
167 546 581 626 682 u|168 569 577 581 616 u|169 553 563 577 602 u|170 531 551 565 569 u|171 508 529 552 554 u|172 528 530 563 566 d
173 550 562 576 582 d|174 548 559 569 572 u|175 543 556 561 570 u|176 555 556 577 577 d|177 551 565 577 587 u|178 559 563 565 582 u
179 552 563 574 579 d|180 565 574 611 611 d|181 598 601 610 634 u|182 587 600 633 637 d|183 596 607 632 645 u|184 602 604 608 619 u`;

const fast = '3,220 16,219 23,213 29,205 42,197 49,195 55,207 61,216 68,223 74,230 81,235 87,237 100,238 113,236 119,237 126,239 132,237 139,232 145,230 152,229 164,221 177,212 184,203 190,199 196,199 203,208 209,222 216,241 222,260 235,298 248,327 261,346 267,353 274,357 280,359 293,359 299,362 306,366 319,363 325,359 338,363 344,353 351,344 357,332 364,326 370,321 376,318 383,322 389,332 396,345 402,354 409,358 415,373 422,393 428,408 441,436 447,444 454,457 460,467 466,481 473,486 479,494 486,508 492,513 499,490 505,471 511,451 518,426 524,404 537,373 544,359 550,347 557,335 563,327 569,315 576,311 582,306 589,302 595,296 602,285 608,276 614,266 627,243 634,233 640,227 647,225 653,224 659,229 666,233 677,233 685,236 692,238 698,239 711,243 717,244 730,251 737,251 743,254 749,258 756,261 762,261 769,268 775,278 782,288 786,290 860,360 949,416 955,426 968,447 974,455 981,461 994,473 1007,481 1026,497 1039,506 1045,512 1052,516 1058,519 1071,540 1077,544 1084,547 1090,549 1097,549 1103,547 1109,548 1116,551 1129,553 1142,556 1154,559 1161,564 1167,569 1174,575 1187,582';
const slow = '3,216 22,215 42,213 50,213 65,215 100,217 130,218 165,217 183,216 205,216 215,218 232,225 248,230 270,236 293,241 306,244 338,249 370,250 376,250 409,258 415,261 422,264 454,278 467,283 479,288 492,295 505,295 518,293 537,292 557,290 595,289 614,286 640,281 653,279 690,277 762,277 785,279 870,285 948,302 980,311 1013,322 1057,337 1070,342 1100,352 1150,369 1187,381';

const dash = 'stroke-dasharray="7.300 4.800 2 5.200"';
let out = `
  <path d="M3 546.500H1500" stroke="#1c8c1c" stroke-width="1" ${dash}/>
  <path d="M3 742.800H1500" stroke="#c00000" stroke-width="1" ${dash}/>
  <path d="M3 604.500H1500" stroke="#566675" stroke-width="1"/>
  <polyline points="${fast}" fill="none" stroke="#ff0000" stroke-width="4" stroke-linejoin="round" stroke-linecap="round"/>
  <polyline points="${slow}" fill="none" stroke="#ff8c00" stroke-width="4" stroke-linejoin="round" stroke-linecap="round"/>
  <path d="M1195 45h9l-4.500 4z" fill="#778899"/>`;

bars.split(/[|\n]/).forEach(row => {
  const [i, high, top, bottom, low, dir] = row.split(' ');
  const x = 3.4 + i * 6.43;
  const h = Math.max(bottom - top, 1);
  out += `<path d="M${x} ${high}V${low}" stroke="#00e000" stroke-width=".9"/>`;
  out += `<rect x="${x - 1.6}" y="${top}" width="3.200" height="${h}" fill="${dir === 'd' ? '#fff' : '#000'}" stroke="#00e000" stroke-width=".9"/>`;
});

document.getElementById('candles').innerHTML = `<g transform="translate(-3 -45)">${out}</g>`;

const prices = ['1972.700', '1970.660', '1968.620', '1966.640', '1964.600', '1962.560', '1960.520', '1958.480', '1956.440', '1954.400', '1952.360', '1950.380', '1948.340', '1946.300', '1944.260', '1942.220', '1940.180', '1938.140', '1936.100', '1934.120', '1932.080', '', '1928.000', '1925.960', '1923.920', '1921.880', '1919.840', '1917.860'];
const times = ['12 Jun 2023', '12 Jun 13:00', '12 Jun 22:00', '13 Jun 06:00', '13 Jun 14:00', '13 Jun 23:00', '14 Jun 07:00', '14 Jun 15:00', '15 Jun 00:00', '15 Jun 08:00', '15 Jun 16:00', '16 Jun 01:00', '16 Jun 09:00', '16 Jun 17:00', '19 Jun 02:00', '19 Jun 10:00', '19 Jun 22:00', '20 Jun 06:00', '20 Jun 14:00', '20 Jun 23:00', '21 Jun 07:00', '21 Jun 15:00', '22 Jun 00:00', '22 Jun 08:00'];

function addLabels(id, list) {
  list.forEach(text => {
    const span = document.createElement('span');
    span.textContent = text;
    document.getElementById(id).appendChild(span);
  });
}

addLabels('prices', prices);
addLabels('times', times);
```
